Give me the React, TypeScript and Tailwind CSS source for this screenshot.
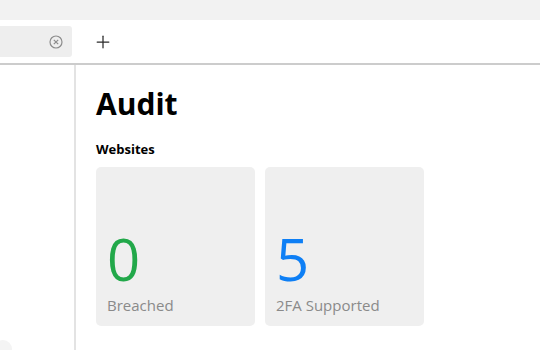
import { Plus } from "lucide-react";

function StatCard({ value, label, color }: { value: number; label: string; color: string }) {
  return (
    <div className="flex h-[159px] w-[159px] flex-col justify-end rounded-[5px] bg-[#efefef] px-[11px] pb-[11px]">
      <div className={`text-[58px] leading-[48px] font-normal ${color}`}>{value}</div>
      <div className="mt-[12px] text-[15px] leading-5 text-[#8a8a8a]">{label}</div>
    </div>
  );
}

export default function App() {
  return (
    <div className="relative flex h-[350px] w-[540px] flex-col overflow-hidden bg-white font-['Open_Sans',sans-serif] text-black">
      {/* title strip */}
      <div className="h-[20px] bg-[#f2f2f2]" />

      {/* tab bar */}
      <div className="flex h-[45px] items-center border-b-2 border-[#cccccc]">
        <div className="flex h-[31px] w-[72px] items-center justify-end rounded-r-[3px] bg-[#eeeeee] pr-[9px]">
          <svg width="14" height="14" viewBox="0 0 14 14" fill="none" stroke="#8c8c8c" strokeWidth="1.2">
            <circle cx="7" cy="7" r="6" />
            <path d="M4.8 4.8l4.4 4.4M9.2 4.8l-4.4 4.4" />
          </svg>
        </div>
        <Plus className="ml-[21px] h-[20px] w-[20px] text-[#2b2b2b]" strokeWidth={1.5} />
      </div>

      <div className="flex flex-1">
        <div className="w-[76px] border-r-2 border-[#e3e3e3]" />
        <main className="flex-1 pl-[20px] pt-[19px]">
          <h1 className="text-[30px] leading-[40px] font-bold">Audit</h1>
          <h2 className="mt-[16px] text-[13px] leading-[18px] font-bold">Websites</h2>
          <div className="mt-[9px] flex gap-[10px]">
            <StatCard value={0} label="Breached" color="text-[#22a84a]" />
            <StatCard value={5} label="2FA Supported" color="text-[#0e7ff5]" />
          </div>
        </main>
      </div>

      <div className="absolute -bottom-[8px] -left-[6px] h-[18px] w-[18px] rounded-full bg-[#f4f4f4]" />
    </div>
  );
}
